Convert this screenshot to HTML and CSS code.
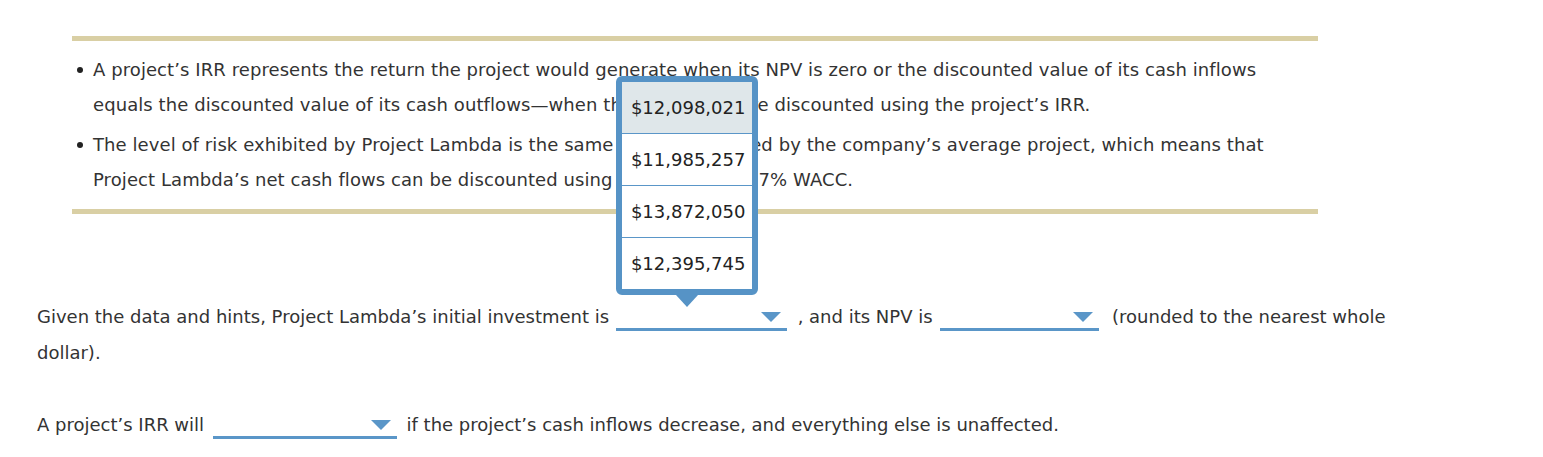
FILE: index.html
```html
<!DOCTYPE html>
<html>
<head>
<meta charset="utf-8">
<link rel="stylesheet" href="styles.css">
</head>
<body>
<div class="page">
  <div class="hints">
    <ul class="hint-list">
      <li>A project’s IRR represents the return the project would generate when its NPV is zero or the discounted value of its cash inflows equals the discounted value of its cash outflows—when the cash flows are discounted using the project’s IRR.</li>
      <li>The level of risk exhibited by Project Lambda is the same as that exhibited by the company’s average project, which means that Project Lambda’s net cash flows can be discounted using the company’s 7% WACC.</li>
    </ul>
  </div>

  <p class="q q1">Given the data and hints, Project Lambda’s initial investment is <span class="dd dd1"><span class="caret"></span><span class="popup"><span class="opt sel">$12,098,021</span><span class="opt">$11,985,257</span><span class="opt">$13,872,050</span><span class="opt">$12,395,745</span></span></span> , and its NPV is <span class="dd dd2"><span class="caret"></span></span> (rounded to the nearest whole dollar).</p>

  <p class="q q2">A project’s IRR will <span class="dd dd3"><span class="caret"></span></span> if the project’s cash inflows decrease, and everything else is unaffected.</p>
</div>
</body>
</html>
```

FILE: styles.css
```css
html, body {
  margin: 0;
  padding: 0;
  background: #ffffff;
}

.page {
  padding: 36px 0 0 37px;
  font-family: "DejaVu Sans", Verdana, sans-serif;
  font-size: 18px;
  color: #333333;
  width: 1400px;
}

.hints {
  margin-left: 35px;
  width: 1246px;
  border-top: 5px solid #d9cfa4;
  border-bottom: 5px solid #d9cfa4;
  padding: 11px 0 12px 0;
}

.hint-list {
  list-style: none;
  margin: 0;
  padding: 0 0 0 21px;
  line-height: 35px;
  letter-spacing: 0.08px;
}

.hint-list li {
  position: relative;
  width: 1200px;
}

.hint-list li + li {
  margin-top: 5px;
}

.hint-list li::before {
  content: "";
  position: absolute;
  left: -16px;
  top: 15px;
  width: 6px;
  height: 6px;
  border-radius: 50%;
  background: #222222;
}

.q {
  margin: 0;
  line-height: 36px;
  width: 1380px;
}

.q1 {
  margin-top: 85px;
}

.q2 {
  margin-top: 36px;
}

.dd {
  position: relative;
  display: inline-block;
  height: 22px;
  border-bottom: 3px solid #5a96c8;
  vertical-align: -8px;
}

.dd1 { width: 171px; margin-left: 1px; margin-right: 5px; }
.dd2 { width: 159px; margin-left: 2px; margin-right: 7px; }
.dd3 { width: 184px; margin-left: 3px; margin-right: 4px; }

.caret {
  position: absolute;
  right: 6px;
  top: 6px;
  width: 0;
  height: 0;
  border-left: 10px solid transparent;
  border-right: 10px solid transparent;
  border-top: 10px solid #5a96c8;
}

.popup {
  position: absolute;
  left: 0;
  bottom: 33px;
  width: 130px;
  border: 6px solid #5693c6;
  border-radius: 6px;
  background: #ffffff;
  display: flex;
  flex-direction: column;
  color: #222222;
}

.popup::after {
  content: "";
  position: absolute;
  left: 50%;
  margin-left: -11px;
  bottom: -18px;
  border-left: 11px solid transparent;
  border-right: 11px solid transparent;
  border-top: 12px solid #5693c6;
}

.opt {
  display: block;
  height: 51px;
  line-height: 51px;
  padding-left: 9px;
  border-top: 1px solid #5a96c8;
  white-space: nowrap;
}

.opt:first-child {
  border-top: none;
}

.opt.sel {
  background: #dfe7ea;
}
```
